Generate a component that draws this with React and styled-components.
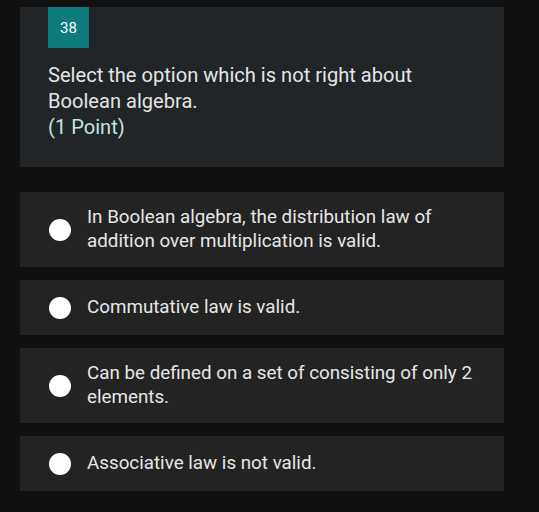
import React from "react";
import styled, { createGlobalStyle } from "styled-components";

const Global = createGlobalStyle`
  html, body { margin: 0; padding: 0; background: #111111; }
  body { font-family: Roboto, "Noto Sans", Arial, sans-serif; }
`;

const Page = styled.div`
  width: 539px;
  min-height: 512px;
  padding: 7px 35px 0 20px;
  box-sizing: border-box;
  display: flex;
  flex-direction: column;
`;

const Header = styled.section`
  background: #212527;
  padding: 0 28px 27px;
  display: flex;
  flex-direction: column;
  align-items: flex-start;
`;

const Badge = styled.div`
  width: 41px;
  height: 41px;
  background: #0d7a7d;
  color: #ffffff;
  font-size: 15px;
  display: flex;
  align-items: center;
  justify-content: center;
`;

const Question = styled.div`
  margin-top: 14px;
  color: #e4e4e4;
  font-size: 20.1px;
  line-height: 26px;
`;

const Points = styled.div`
  color: #c2e4e2;
`;

const Options = styled.div`
  margin-top: 25px;
  display: flex;
  flex-direction: column;
  gap: 13px;
`;

const Option = styled.label`
  background: #232323;
  padding: 14px 20px 14px 29px;
  display: flex;
  align-items: center;
  min-height: 27px;
  gap: 16px;
`;

const Radio = styled.span`
  flex: none;
  width: 22px;
  height: 22px;
  border-radius: 50%;
  background: #ffffff;
`;

const OptionText = styled.span`
  color: #e6e6e6;
  font-size: 18.8px;
  line-height: 23.5px;
`;

const options = [
  "In Boolean algebra, the distribution law of addition over multiplication is valid.",
  "Commutative law is valid.",
  "Can be defined on a set of consisting of only 2 elements.",
  "Associative law is not valid.",
];

export default function App() {
  return (
    <>
      <Global />
      <Page>
        <Header>
          <Badge>38</Badge>
          <Question>
            Select the option which is not right about
            <br />
            Boolean algebra.
            <Points>(1 Point)</Points>
          </Question>
        </Header>
        <Options>
          {options.map((o, i) => (
            <Option key={i}>
              <Radio />
              <OptionText>{o}</OptionText>
            </Option>
          ))}
        </Options>
      </Page>
    </>
  );
}
